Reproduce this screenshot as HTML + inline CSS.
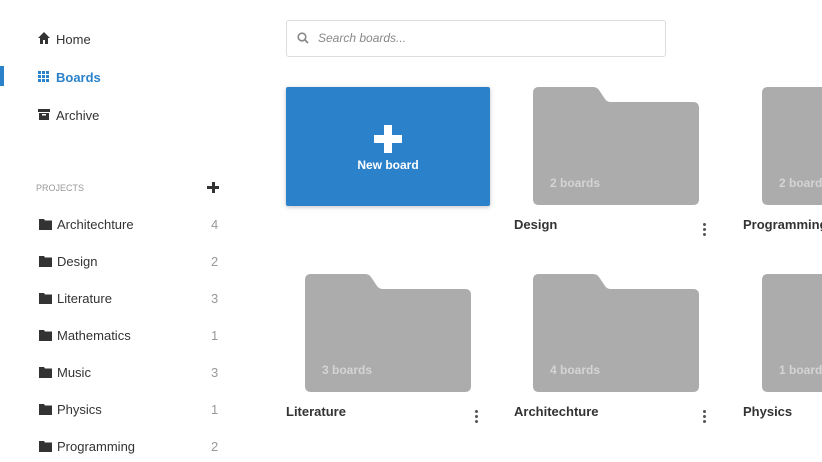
<!DOCTYPE html>
<html><head><style>
*{margin:0;padding:0;box-sizing:border-box}
html,body{width:822px;height:462px;overflow:hidden}
body{background:#fff;font-family:"Liberation Sans",sans-serif;color:#333}
#w{position:relative;width:822px;height:462px;overflow:hidden}
.a{position:absolute;white-space:nowrap}
.nav{font-size:13px;color:#333}
.proj{font-size:13px;color:#333}
.cnt{font-size:13px;color:#999;left:211px}
.t{font-size:13px;font-weight:bold;color:#333}
.lbl{font-size:12px;font-weight:bold;color:#d4d4d4}
i{display:block;width:3px;height:3px;background:#555;border-radius:50%;margin-bottom:2px}
</style></head><body><div id="w">
<div class="a" style="left:0;top:66px;width:4px;height:20px;background:#2b82cb"></div>
<svg class="a" style="left:38px;top:32px" width="12" height="12" viewBox="0 0 12 12"><path d="M6 0L0 6H2V12H5V8H7V12H10V6H12Z" fill="#333"/></svg>
<div class="a nav" style="left:56px;top:32px">Home</div>
<svg class="a" style="left:38px;top:71px" width="11" height="11" viewBox="0 0 11 11" fill="#2b82cb"><rect x="0" y="0" width="3" height="3"/><rect x="4" y="0" width="3" height="3"/><rect x="8" y="0" width="3" height="3"/><rect x="0" y="4" width="3" height="3"/><rect x="4" y="4" width="3" height="3"/><rect x="8" y="4" width="3" height="3"/><rect x="0" y="8" width="3" height="3"/><rect x="4" y="8" width="3" height="3"/><rect x="8" y="8" width="3" height="3"/></svg>
<div class="a nav" style="left:56px;top:70px;color:#2b82cb;font-weight:bold">Boards</div>
<svg class="a" style="left:38px;top:109px" width="12" height="11" viewBox="0 0 12 11" fill="#333"><rect x="0" y="0" width="12" height="3"/><path d="M1 4H11V11H1Z M4 5V6.5H8V5Z" fill-rule="evenodd"/></svg>
<div class="a nav" style="left:56px;top:108px">Archive</div>
<div class="a" style="left:36px;top:183px;font-size:9px;color:#999">PROJECTS</div>
<div class="a" style="left:207px;top:186px;width:12px;height:3px;background:#333"></div>
<div class="a" style="left:211.5px;top:182px;width:3px;height:11px;background:#333"></div>
<svg class="a" style="left:39px;top:219px" width="13" height="11" viewBox="0 0 13 11"><path d="M0 0H5L6 1.5H13V11H0Z" fill="#333"/></svg><div class="a proj" style="left:57px;top:217px">Architechture</div><div class="a cnt" style="top:217px">4</div>
<svg class="a" style="left:39px;top:256px" width="13" height="11" viewBox="0 0 13 11"><path d="M0 0H5L6 1.5H13V11H0Z" fill="#333"/></svg><div class="a proj" style="left:57px;top:254px">Design</div><div class="a cnt" style="top:254px">2</div>
<svg class="a" style="left:39px;top:293px" width="13" height="11" viewBox="0 0 13 11"><path d="M0 0H5L6 1.5H13V11H0Z" fill="#333"/></svg><div class="a proj" style="left:57px;top:291px">Literature</div><div class="a cnt" style="top:291px">3</div>
<svg class="a" style="left:39px;top:330px" width="13" height="11" viewBox="0 0 13 11"><path d="M0 0H5L6 1.5H13V11H0Z" fill="#333"/></svg><div class="a proj" style="left:57px;top:328px">Mathematics</div><div class="a cnt" style="top:328px">1</div>
<svg class="a" style="left:39px;top:367px" width="13" height="11" viewBox="0 0 13 11"><path d="M0 0H5L6 1.5H13V11H0Z" fill="#333"/></svg><div class="a proj" style="left:57px;top:365px">Music</div><div class="a cnt" style="top:365px">3</div>
<svg class="a" style="left:39px;top:404px" width="13" height="11" viewBox="0 0 13 11"><path d="M0 0H5L6 1.5H13V11H0Z" fill="#333"/></svg><div class="a proj" style="left:57px;top:402px">Physics</div><div class="a cnt" style="top:402px">1</div>
<svg class="a" style="left:39px;top:441px" width="13" height="11" viewBox="0 0 13 11"><path d="M0 0H5L6 1.5H13V11H0Z" fill="#333"/></svg><div class="a proj" style="left:57px;top:439px">Programming</div><div class="a cnt" style="top:439px">2</div>
<div class="a" style="left:286px;top:20px;width:380px;height:37px;border:1px solid #ddd;border-radius:3px"></div>
<svg class="a" style="left:297px;top:32px" width="12" height="12" viewBox="0 0 12 12"><circle cx="5" cy="5" r="3.8" stroke="#888" stroke-width="1.6" fill="none"/><path d="M7.8 7.8L11 11" stroke="#888" stroke-width="1.8"/></svg>
<div class="a" style="left:318px;top:31px;font-size:12px;font-style:italic;color:#888">Search boards...</div>
<div class="a" style="left:286px;top:87px;width:204px;height:119px;background:#2b82cb;border-radius:2px;box-shadow:0 1px 4px rgba(0,0,0,.25)"></div>
<div class="a" style="left:374px;top:135px;width:28px;height:8px;background:#fff"></div>
<div class="a" style="left:384px;top:125px;width:8px;height:28px;background:#fff"></div>
<div class="a" style="left:286px;top:158px;width:204px;text-align:center;font-size:12px;font-weight:bold;color:#fff">New board</div>
<svg class="a" style="left:533px;top:87px" width="167" height="119"><path d="M6 0H60Q64 0 66 3L72 12Q74 15 78 15H160Q166 15 166 21V112Q166 118 160 118H6Q0 118 0 112V6Q0 0 6 0Z" fill="#acacac"/></svg>
<div class="a lbl" style="left:550px;top:176px">2 boards</div>
<div class="a t" style="left:514px;top:217px">Design</div>
<div class="a" style="left:703px;top:223px"><i></i><i></i><i></i></div>
<svg class="a" style="left:762px;top:87px" width="167" height="119"><path d="M6 0H60Q64 0 66 3L72 12Q74 15 78 15H160Q166 15 166 21V112Q166 118 160 118H6Q0 118 0 112V6Q0 0 6 0Z" fill="#acacac"/></svg>
<div class="a lbl" style="left:779px;top:176px">2 boards</div>
<div class="a t" style="left:743px;top:217px">Programming</div>
<svg class="a" style="left:305px;top:274px" width="167" height="119"><path d="M6 0H60Q64 0 66 3L72 12Q74 15 78 15H160Q166 15 166 21V112Q166 118 160 118H6Q0 118 0 112V6Q0 0 6 0Z" fill="#acacac"/></svg>
<div class="a lbl" style="left:322px;top:363px">3 boards</div>
<div class="a t" style="left:286px;top:404px">Literature</div>
<div class="a" style="left:475px;top:410px"><i></i><i></i><i></i></div>
<svg class="a" style="left:533px;top:274px" width="167" height="119"><path d="M6 0H60Q64 0 66 3L72 12Q74 15 78 15H160Q166 15 166 21V112Q166 118 160 118H6Q0 118 0 112V6Q0 0 6 0Z" fill="#acacac"/></svg>
<div class="a lbl" style="left:550px;top:363px">4 boards</div>
<div class="a t" style="left:514px;top:404px">Architechture</div>
<div class="a" style="left:703px;top:410px"><i></i><i></i><i></i></div>
<svg class="a" style="left:762px;top:274px" width="167" height="119"><path d="M6 0H60Q64 0 66 3L72 12Q74 15 78 15H160Q166 15 166 21V112Q166 118 160 118H6Q0 118 0 112V6Q0 0 6 0Z" fill="#acacac"/></svg>
<div class="a lbl" style="left:779px;top:363px">1 boards</div>
<div class="a t" style="left:743px;top:404px">Physics</div>
</div></body></html>
